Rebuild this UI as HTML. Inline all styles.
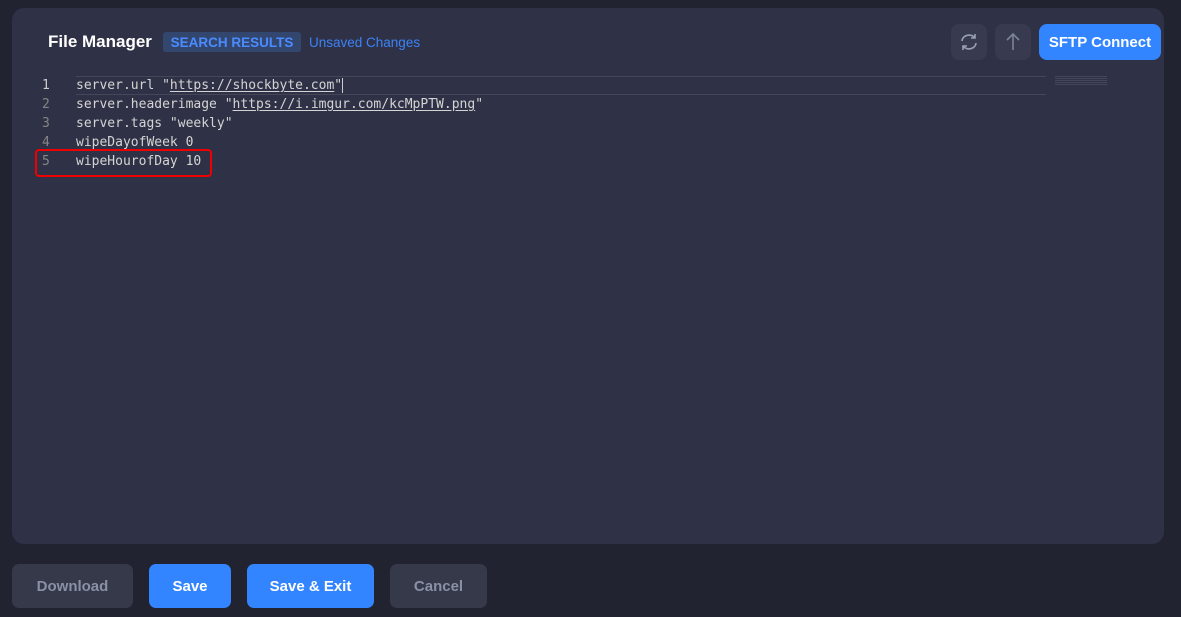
<!DOCTYPE html>
<html><head><style>
body{margin:0;width:1181px;height:617px;background:#212331;font-family:"Liberation Sans",sans-serif;position:relative;overflow:hidden}
.panel{position:absolute;left:12px;top:8px;width:1152px;height:536px;background:#2f3246;border-radius:12px}
.title{position:absolute;left:48px;top:32px;color:#fff;font-weight:bold;font-size:17px}
.badge{position:absolute;left:163px;top:32px;height:20px;width:138px;box-sizing:border-box;white-space:nowrap;background:#33466e;color:#4a8cff;font-weight:bold;font-size:13.5px;line-height:21px;border-radius:3px;text-align:center}
.uns{position:absolute;left:309px;top:35px;color:#3b82f6;font-size:13.5px}
.ib{position:absolute;top:24px;width:36px;height:36px;background:#383b50;border-radius:8px}
.btn{position:absolute;top:564px;height:44px;border-radius:7px;font-weight:bold;font-size:15px;line-height:45px;text-align:center}
.code{position:absolute;left:0;top:77px;font-family:"DejaVu Sans Mono",monospace;font-size:13px;color:#d4d4d4}
.ln{position:absolute;left:42px;width:12px;text-align:left;color:#858585}
.ct{position:absolute;left:76px;white-space:pre}
u{text-decoration:underline;text-underline-offset:2px}
</style></head><body>
<div class="panel"></div>
<div class="title">File Manager</div>
<div class="badge">SEARCH RESULTS</div>
<div class="uns">Unsaved Changes</div>
<div class="ib" style="left:951px"><svg width="36" height="36" viewBox="0 0 36 36" fill="none" stroke="#9aa0b4" stroke-width="1.6"><path d="M11 17a7 6 0 0 1 13-3M25 19a7 6 0 0 1-13 3"/><path d="M24 10v4h-4M12 26v-4h4"/></svg></div>
<div class="ib" style="left:995px"><svg width="36" height="36" viewBox="0 0 36 36" fill="none" stroke="#7d8398" stroke-width="1.6"><path d="M18 26V10M12 16l6-6 6 6"/></svg></div>
<div style="position:absolute;left:1039px;top:24px;width:122px;height:36px;background:#3385ff;border-radius:8px;color:#fff;font-weight:bold;font-size:15px;line-height:37px;text-align:center">SFTP Connect</div>
<div style="position:absolute;left:76px;top:76px;width:970px;height:17px;border-top:1px solid #44475a;border-bottom:1px solid #44475a"></div>
<div style="position:absolute;left:1055px;top:76px;width:52px;height:10px;background:repeating-linear-gradient(#6a6d80 0 1px,transparent 1px 2px);opacity:.35"></div>
<div class="code">
<div class="ln" style="top:1px;color:#ccc">1</div><div class="ct" style="top:1px">server.url "<u>https://shockbyte.com</u>"<span style="border-left:1px solid #ccc"> </span></div>
<div class="ln" style="top:20px">2</div><div class="ct" style="top:20px">server.headerimage "<u>https://i.imgur.com/kcMpPTW.png</u>"</div>
<div class="ln" style="top:39px">3</div><div class="ct" style="top:39px">server.tags "weekly"</div>
<div class="ln" style="top:58px">4</div><div class="ct" style="top:58px">wipeDayofWeek 0</div>
<div class="ln" style="top:77px">5</div><div class="ct" style="top:77px">wipeHourofDay 10</div>
</div>
<div style="position:absolute;left:35px;top:149px;width:173px;height:24px;border:2.5px solid #e00;border-radius:4px"></div>
<div class="btn" style="left:12px;width:121px;background:#363949;color:#8a90a6">Download</div>
<div class="btn" style="left:149px;width:82px;background:#3385ff;color:#fff">Save</div>
<div class="btn" style="left:247px;width:127px;background:#3385ff;color:#fff">Save &amp; Exit</div>
<div class="btn" style="left:390px;width:97px;background:#363949;color:#8a90a6">Cancel</div>
</body></html>
